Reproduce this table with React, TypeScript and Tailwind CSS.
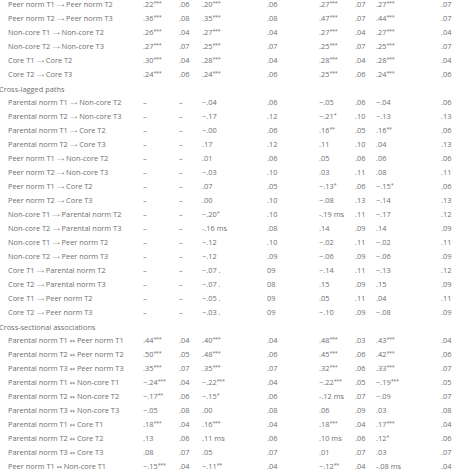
import React from 'react'

type Row = string[]

const auto: Row[] = [
  ['Peer norm T1 → Peer norm T2', '.22***', '.06', '.20***', '.06', '.27***', '.07', '.27***', '.07'],
  ['Peer norm T2 → Peer norm T3', '.36***', '.08', '.35***', '.08', '.47***', '.07', '.44***', '.07'],
  ['Non-core T1 → Non-core T2', '.26***', '.04', '.27***', '.04', '.27***', '.04', '.27***', '.04'],
  ['Non-core T2 → Non-core T3', '.27***', '.07', '.25***', '.07', '.25***', '.07', '.25***', '.07'],
  ['Core T1 → Core T2', '.30***', '.04', '.28***', '.04', '.28***', '.04', '.28***', '.04'],
  ['Core T2 → Core T3', '.24***', '.06', '.24***', '.06', '.25***', '.06', '.24***', '.06'],
]

const lagged: Row[] = [
  ['Parental norm T1 → Non-core T2', '–', '–', '−.04', '.06', '−.05', '.06', '−.04', '.06'],
  ['Parental norm T2 → Non-core T3', '–', '–', '−.17', '.12', '−.21*', '.10', '−.13', '.13'],
  ['Parental norm T1 → Core T2', '–', '–', '−.00', '.06', '.16**', '.05', '.16**', '.06'],
  ['Parental norm T2 → Core T3', '–', '–', '.17', '.12', '.11', '.10', '.04', '.13'],
  ['Peer norm T1 → Non-core T2', '–', '–', '.01', '.06', '.05', '.06', '.06', '.06'],
  ['Peer norm T2 → Non-core T3', '–', '–', '−.03', '.10', '.03', '.11', '.08', '.11'],
  ['Peer norm T1 → Core T2', '–', '–', '.07', '.05', '−.13*', '.06', '−.15*', '.06'],
  ['Peer norm T2 → Core T3', '–', '–', '.00', '.10', '−.08', '.13', '−.14', '.13'],
  ['Non-core T1 → Parental norm T2', '–', '–', '−.20*', '.10', '-.19 ms', '.11', '−.17', '.12'],
  ['Non-core T2 → Parental norm T3', '–', '–', '-.16 ms', '.08', '.14', '.09', '.14', '.09'],
  ['Non-core T1 → Peer norm T2', '–', '–', '−.12', '.10', '−.02', '.11', '−.02', '.11'],
  ['Non-core T2 → Peer norm T3', '–', '–', '−.12', '.09', '−.06', '.09', '−.06', '.09'],
  ['Core T1 → Parental norm T2', '–', '–', '−.07 .', '09', '−.14', '.11', '−.13', '.12'],
  ['Core T2 → Parental norm T3', '–', '–', '−.07 .', '08', '.15', '.09', '.15', '.09'],
  ['Core T1 → Peer norm T2', '–', '–', '−.05 .', '09', '.05', '.11', '.04', '.11'],
  ['Core T2 → Peer norm T3', '–', '–', '−.03 .', '09', '−.10', '.09', '−.08', '.09'],
]

const cross: Row[] = [
  ['Parental norm T1 ↔ Peer norm T1', '.44***', '.04', '.40***', '.04', '.48***', '.03', '.43***', '.04'],
  ['Parental norm T2 ↔ Peer norm T2', '.50***', '.05', '.48***', '.06', '.45***', '.06', '.42***', '.06'],
  ['Parental norm T3 ↔ Peer norm T3', '.35***', '.07', '.35***', '.07', '.32***', '.06', '.33***', '.07'],
  ['Parental norm T1 ↔ Non-core T1', '−.24***', '.04', '−.22***', '.04', '−.22***', '.05', '−.19***', '.05'],
  ['Parental norm T2 ↔ Non-core T2', '−.17**', '.06', '−.15*', '.06', '-.12 ms', '.07', '−.09', '.07'],
  ['Parental norm T3 ↔ Non-core T3', '−.05', '.08', '.00', '.08', '.06', '.09', '.03', '.08'],
  ['Parental norm T1 ↔ Core T1', '.18***', '.04', '.16***', '.04', '.18***', '.04', '.17***', '.04'],
  ['Parental norm T2 ↔ Core T2', '.13', '.06', '.11 ms', '.06', '.10 ms', '.06', '.12*', '.06'],
  ['Parental norm T3 ↔ Core T3', '.08', '.07', '.05', '.07', '.01', '.07', '.03', '.07'],
  ['Peer norm T1 ↔ Non-core T1', '−.15***', '.04', '−.11**', '.04', '−.12**', '.04', '-.08 ms', '.04'],
]

function Value({ v }: { v: string }) {
  const m = v.match(/^([^*]*)(\**)$/)
  const base = m ? m[1] : v
  const stars = m ? m[2] : ''
  return (
    <span className="whitespace-nowrap">
      {base}
      {stars && <span className="relative -top-[1.5px] text-[5.5px] tracking-[-0.4px]">{stars}</span>}
    </span>
  )
}

// arrow drawn from DejaVu so it gets the longer shaft of the original
function Label({ text }: { text: string }) {
  const arrow = text.includes('→') ? '→' : '↔'
  const [a, b] = text.split(` ${arrow} `)
  return (
    <div className="whitespace-nowrap pl-[8px]">
      {a}{' '}
      {arrow === '→' ? (
        <span className="font-['DejaVu_Sans',sans-serif] text-[5.2px]">⟶</span>
      ) : (
        <span className="font-['DejaVu_Sans',sans-serif] text-[6.2px]">↔</span>
      )}{' '}
      {b}
    </div>
  )
}

function TableRow({ row }: { row: Row }) {
  return (
    <div className="grid h-[14px] grid-cols-[143px_36px_23px_65px_52px_36px_21px_65px_33px] items-center">
      <Label text={row[0]} />
      {row.slice(1).map((v, i) => (
        <div key={i}>
          <Value v={v} />
        </div>
      ))}
      <div />
    </div>
  )
}

function Section({ title }: { title: string }) {
  return <div className="flex h-[14px] items-center -ml-[1px] whitespace-nowrap">{title}</div>
}

export default function App() {
  return (
    <div className="h-[474px] w-[474px] overflow-hidden bg-white font-['Open_Sans','Liberation_Sans',sans-serif] text-[7.4px] leading-none text-[#6f6f6f]">
      <div className="-mt-[1px]">
        {auto.map((r) => (
          <TableRow key={r[0]} row={r} />
        ))}
        <Section title="Cross-lagged paths" />
        {lagged.map((r) => (
          <TableRow key={r[0]} row={r} />
        ))}
        <Section title="Cross-sectional associations" />
        {cross.map((r) => (
          <TableRow key={r[0]} row={r} />
        ))}
      </div>
    </div>
  )
}
